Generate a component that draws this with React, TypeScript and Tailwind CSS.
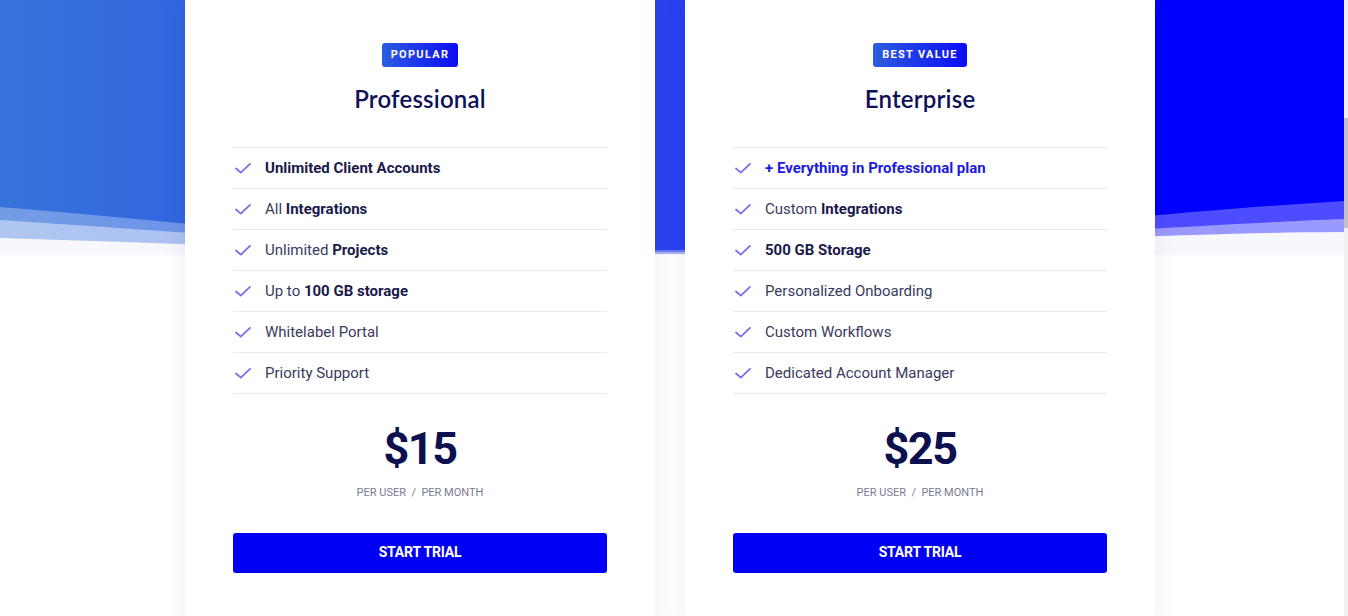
type Part = { text: string; bold?: boolean };
type Feature = { parts: Part[]; accent?: boolean };

type Plan = {
  badge: string;
  name: string;
  price: string;
  features: Feature[];
};

const PLANS: Plan[] = [
  {
    badge: 'Popular',
    name: 'Professional',
    price: '$15',
    features: [
      { parts: [{ text: 'Unlimited Client Accounts', bold: true }] },
      { parts: [{ text: 'All ' }, { text: 'Integrations', bold: true }] },
      { parts: [{ text: 'Unlimited ' }, { text: 'Projects', bold: true }] },
      { parts: [{ text: 'Up to ' }, { text: '100 GB storage', bold: true }] },
      { parts: [{ text: 'Whitelabel Portal' }] },
      { parts: [{ text: 'Priority Support' }] },
    ],
  },
  {
    badge: 'Best Value',
    name: 'Enterprise',
    price: '$25',
    features: [
      { parts: [{ text: '+ Everything in Professional plan', bold: true }], accent: true },
      { parts: [{ text: 'Custom ' }, { text: 'Integrations', bold: true }] },
      { parts: [{ text: '500 GB Storage', bold: true }] },
      { parts: [{ text: 'Personalized Onboarding' }] },
      { parts: [{ text: 'Custom Workflows' }] },
      { parts: [{ text: 'Dedicated Account Manager' }] },
    ],
  },
];

// Flat check mark used in the feature list
function CheckMark() {
  return (
    <svg className="h-[12px] w-[16px] shrink-0" viewBox="0 0 16 12" fill="none" aria-hidden="true">
      <path d="M1,6.5 L5.8,10.6 L15,1.8" stroke="#7b68ee" strokeWidth="1.7" strokeLinecap="round" strokeLinejoin="round" />
    </svg>
  );
}

// Wave at the bottom of the hero band
function HeroWave() {
  return (
    <svg
      className="absolute inset-x-0 bottom-0 h-[60px] w-full"
      viewBox="0 0 1344 60"
      preserveAspectRatio="none"
      aria-hidden="true"
    >
      <path d="M0,12 C200,28 420,56 670,55 C900,54 1050,24 1344,6 V60 H0 Z" fill="#ffffff" fillOpacity="0.3" />
      <path d="M0,25 C200,38 420,58 670,57 C900,56 1050,36 1344,24 V60 H0 Z" fill="#ffffff" fillOpacity="0.43" />
      <path d="M0,43 C200,49 420,59 670,59 C900,59 1050,39 1344,37 V60 H0 Z" fill="#f6f8fd" />
    </svg>
  );
}

function PlanCard({ plan }: { plan: Plan }) {
  return (
    <div className="flex w-[470px] flex-col items-center bg-white px-12 pt-[43px] pb-[60px] shadow-[0_0_24px_rgba(20,30,80,0.07)]">
      <span className="rounded-[3px] bg-[linear-gradient(90deg,#2c5ce0,#0c0cf4)] px-[9px] py-[5px] font-['Roboto',sans-serif] text-[11px] leading-[14px] font-bold tracking-[1.3px] text-white uppercase">
        {plan.badge}
      </span>
      <h3 className="mt-[17px] font-['Lato',sans-serif] text-[24px] leading-[30px] font-semibold tracking-[0.2px] text-[#0f1157]">
        {plan.name}
      </h3>

      <ul className="mt-[33px] w-full border-t border-[#e9e9ef] font-['Roboto',sans-serif] text-[15px]">
        {plan.features.map((f, i) => (
          <li key={i} className="flex h-[41px] items-center gap-[14px] border-b border-[#e9e9ef] pl-[2px]">
            <CheckMark />
            <span className={f.accent ? 'text-[#1b1bdc]' : 'text-[#3a3a5e]'}>
              {f.parts.map((p, j) => (
                <span key={j} className={p.bold ? (f.accent ? 'font-bold' : 'font-bold text-[#1a1a4a]') : ''}>
                  {p.text}
                </span>
              ))}
            </span>
          </li>
        ))}
      </ul>

      <div className="mt-[27px] font-['Roboto',sans-serif] text-[45px] leading-[56px] font-bold tracking-[-1.5px] text-[#0c104f]">
        {plan.price}
      </div>
      <div className="mt-[8px] font-['Roboto',sans-serif] text-[11px] text-[#777b92] uppercase">
        Per user&nbsp;&nbsp;/&nbsp;&nbsp;Per month
      </div>

      <button
        type="button"
        className="mt-[31px] h-[40px] w-full rounded-[3px] bg-[#0000f5] font-['Roboto',sans-serif] text-[14px] font-bold tracking-[-0.2px] text-white uppercase"
      >
        Start trial
      </button>
    </div>
  );
}

export default function App() {
  return (
    <div className="flex h-[616px] w-full overflow-hidden bg-white">
      <main className="relative flex-1">
        {/* Hero band behind the cards */}
        <div className="absolute inset-x-0 top-0 h-[255px] bg-[linear-gradient(90deg,#3573d9_0%,#2b45ee_48%,#0000ff_85%)]">
          <HeroWave />
        </div>

        <div className="relative flex justify-center gap-[30px] pr-[4px]">
          {PLANS.map((plan) => (
            <PlanCard key={plan.name} plan={plan} />
          ))}
        </div>
      </main>

      {/* Scrollbar */}
      <aside className="w-[4px] shrink-0 bg-[#f0f0f0]">
        <div className="mt-[118px] h-[110px] w-full bg-[#c2c2c2]" />
      </aside>
    </div>
  );
}
